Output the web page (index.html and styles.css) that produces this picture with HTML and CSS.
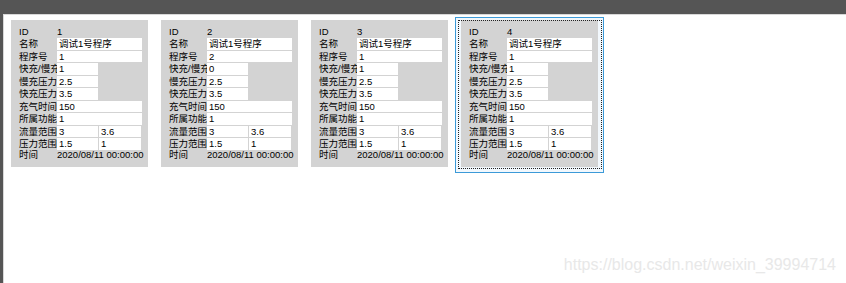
FILE: index.html
```html
<!DOCTYPE html>
<html lang="zh">
<head>
  <meta charset="UTF-8">
  <title>程序列表</title>
  <link rel="stylesheet" href="styles.css">
</head>
<body>
  <div class="titlebar"></div>
  <div class="window">
    <div class="flow">

      <div class="card">
        <span class="lbl">ID</span><span class="val">1</span>
        <span class="lbl">名称</span><span class="box wide">调试1号程序</span>
        <span class="lbl">程序号</span><span class="box wide">1</span>
        <span class="lbl">快充/慢充</span><span class="box">1</span>
        <span class="lbl">慢充压力</span><span class="box">2.5</span>
        <span class="lbl">快充压力</span><span class="box">3.5</span>
        <span class="lbl">充气时间</span><span class="box wide">150</span>
        <span class="lbl">所属功能</span><span class="box wide">1</span>
        <span class="lbl">流量范围</span><span class="box">3</span><span class="box">3.6</span>
        <span class="lbl">压力范围</span><span class="box">1.5</span><span class="box">1</span>
        <span class="lbl time">时间</span><span class="val wide time">2020/08/11 00:00:00</span>
      </div>

      <div class="card">
        <span class="lbl">ID</span><span class="val">2</span>
        <span class="lbl">名称</span><span class="box wide">调试1号程序</span>
        <span class="lbl">程序号</span><span class="box wide">2</span>
        <span class="lbl">快充/慢充</span><span class="box">0</span>
        <span class="lbl">慢充压力</span><span class="box">2.5</span>
        <span class="lbl">快充压力</span><span class="box">3.5</span>
        <span class="lbl">充气时间</span><span class="box wide">150</span>
        <span class="lbl">所属功能</span><span class="box wide">1</span>
        <span class="lbl">流量范围</span><span class="box">3</span><span class="box">3.6</span>
        <span class="lbl">压力范围</span><span class="box">1.5</span><span class="box">1</span>
        <span class="lbl time">时间</span><span class="val wide time">2020/08/11 00:00:00</span>
      </div>

      <div class="card">
        <span class="lbl">ID</span><span class="val">3</span>
        <span class="lbl">名称</span><span class="box wide">调试1号程序</span>
        <span class="lbl">程序号</span><span class="box wide">1</span>
        <span class="lbl">快充/慢充</span><span class="box">1</span>
        <span class="lbl">慢充压力</span><span class="box">2.5</span>
        <span class="lbl">快充压力</span><span class="box">3.5</span>
        <span class="lbl">充气时间</span><span class="box wide">150</span>
        <span class="lbl">所属功能</span><span class="box wide">1</span>
        <span class="lbl">流量范围</span><span class="box">3</span><span class="box">3.6</span>
        <span class="lbl">压力范围</span><span class="box">1.5</span><span class="box">1</span>
        <span class="lbl time">时间</span><span class="val wide time">2020/08/11 00:00:00</span>
      </div>

      <div class="card selected">
        <span class="lbl">ID</span><span class="val">4</span>
        <span class="lbl">名称</span><span class="box wide">调试1号程序</span>
        <span class="lbl">程序号</span><span class="box wide">1</span>
        <span class="lbl">快充/慢充</span><span class="box">1</span>
        <span class="lbl">慢充压力</span><span class="box">2.5</span>
        <span class="lbl">快充压力</span><span class="box">3.5</span>
        <span class="lbl">充气时间</span><span class="box wide">150</span>
        <span class="lbl">所属功能</span><span class="box wide">1</span>
        <span class="lbl">流量范围</span><span class="box">3</span><span class="box">3.6</span>
        <span class="lbl">压力范围</span><span class="box">1.5</span><span class="box">1</span>
        <span class="lbl time">时间</span><span class="val wide time">2020/08/11 00:00:00</span>
      </div>

    </div>
    <div class="watermark">https://blog.csdn.net/weixin_39994714</div>
  </div>
</body>
</html>
```

FILE: styles.css
```css
html, body {
  height: 100%;
}

body {
  margin: 0;
  display: flex;
  flex-direction: column;
  font-family: "Liberation Sans", "Noto Sans CJK SC", sans-serif;
  font-size: 9.5px;
  color: #000;
  background-color: #fff;
  overflow: hidden;
}

.titlebar {
  height: 14px;
  background-color: #555;
  flex: none;
}

.window {
  flex: 1;
  position: relative;
  border-left: 3px solid #555;
}

.flow {
  height: 100%;
  box-sizing: border-box;
  display: flex;
  align-items: flex-start;
  gap: 13px;
  padding: 5px 0 0 7px;
  border-top: 1px solid #d8d8d8;
  border-left: 1px solid #d8d8d8;
}

.card {
  position: relative;
  width: 137px;
  height: 147px;
  box-sizing: border-box;
  padding: 5.5px 6px 0 8px;
  background-color: #d3d3d3;
  display: grid;
  grid-template-columns: 38px 42px 43px;
  grid-auto-rows: 12.5px;
  align-content: start;
}

.lbl {
  grid-column: 1;
  white-space: nowrap;
  line-height: 12.5px;
}

.val {
  line-height: 12.5px;
  white-space: nowrap;
}

/* the text boxes sit over the label column, so long labels get covered */
.box {
  background-color: #fff;
  margin: 0 1px 1px 0;
  padding-left: 2px;
  line-height: 11.5px;
  white-space: nowrap;
}

.wide {
  grid-column: span 2;
  margin-right: 0;
}

.time {
  margin-top: -2px;
}

.selected::before {
  content: "";
  position: absolute;
  top: -3px;
  left: -6px;
  right: -6px;
  bottom: -6px;
  border: 1px solid #3c9ad8;
  background-color: #f2f8fd;
  z-index: -1;
}

.selected::after {
  content: "";
  position: absolute;
  top: 0;
  left: -3px;
  right: -4px;
  bottom: -2px;
  border: 1px dotted #222;
  pointer-events: none;
}

.watermark {
  position: absolute;
  right: 10px;
  bottom: 9px;
  font-family: "Liberation Sans", Arial, sans-serif;
  font-size: 16px;
  color: #e8e8e8;
}
```
